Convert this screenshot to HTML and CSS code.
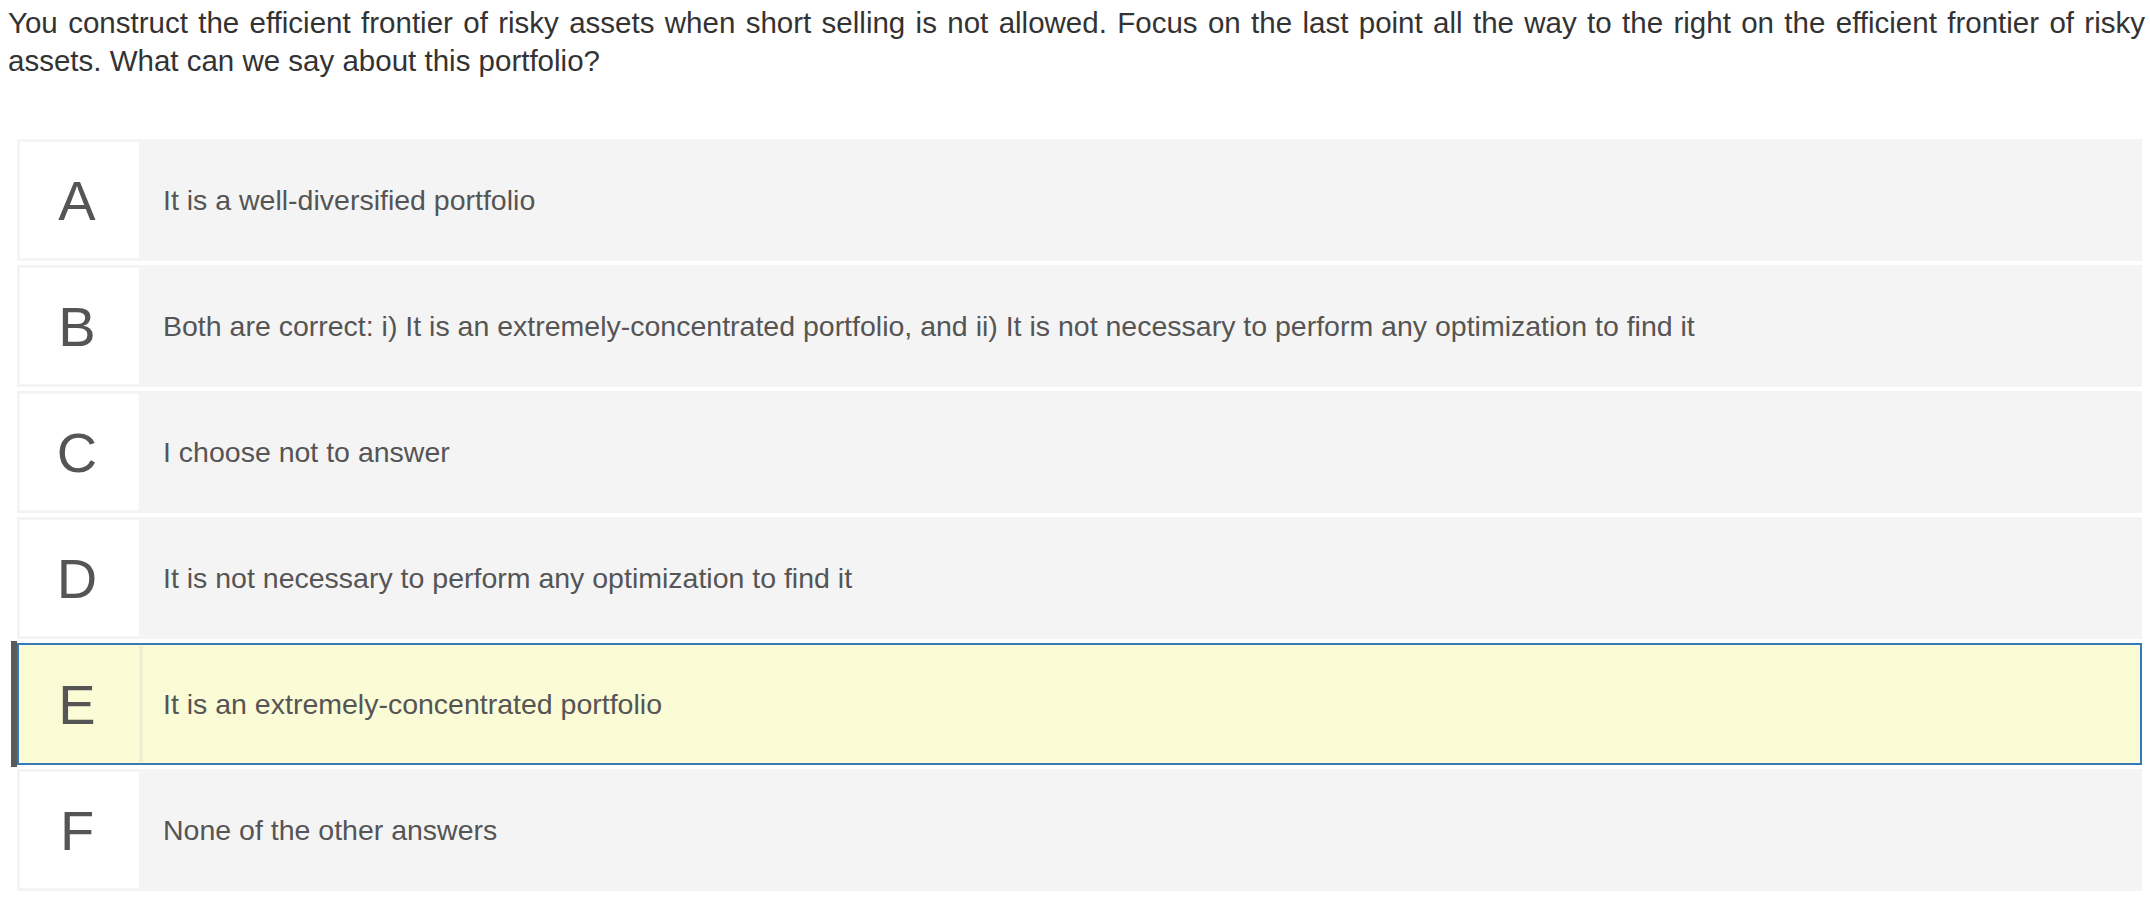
FILE: index.html
```html
<!DOCTYPE html>
<html lang="en">
<head>
<meta charset="utf-8">
<title>Question</title>
<link rel="stylesheet" href="styles.css">
</head>
<body>
<div class="page">
  <p class="question">You construct the efficient frontier of risky assets when short selling is not allowed. Focus on the last point all the way to the right on the efficient frontier of risky assets. What can we say about this portfolio?</p>
  <div class="options">
    <div class="option"><div class="letter">A</div><div class="text">It is a well-diversified portfolio</div></div>
    <div class="option"><div class="letter">B</div><div class="text">Both are correct: i) It is an extremely-concentrated portfolio, and ii) It is not necessary to perform any optimization to find it</div></div>
    <div class="option"><div class="letter">C</div><div class="text">I choose not to answer</div></div>
    <div class="option"><div class="letter">D</div><div class="text">It is not necessary to perform any optimization to find it</div></div>
    <div class="option selected"><div class="letter">E</div><div class="text">It is an extremely-concentrated portfolio</div></div>
    <div class="option"><div class="letter">F</div><div class="text">None of the other answers</div></div>
  </div>
</div>
</body>
</html>
```

FILE: styles.css
```css
html, body {
  margin: 0;
  padding: 0;
  background: #ffffff;
}

.page {
  padding: 4px 5px 0 8px;
  font-family: "Liberation Sans", Arial, Helvetica, sans-serif;
}

.question {
  margin: 0 0 59px 0;
  font-size: 29.5px;
  line-height: 38px;
  color: #333333;
  text-align: justify;
}

.options {
  display: flex;
  flex-direction: column;
  gap: 4px;
  margin: 0 3px 0 9px;
}

.option {
  display: flex;
  height: 122px;
  box-sizing: border-box;
  padding: 3px;
  background: #f4f4f4;
  position: relative;
}

.letter {
  flex: 0 0 119px;
  display: flex;
  align-items: center;
  justify-content: center;
  background: #ffffff;
  font-size: 56px;
  color: #555555;
  padding-right: 5px;
  box-sizing: border-box;
}

.text {
  flex: 1;
  display: flex;
  align-items: center;
  padding-left: 24px;
  font-size: 28.5px;
  color: #555555;
}

.option.selected {
  background: #fbfbd5;
  border: 2px solid #337ab7;
  padding: 1px;
}

.option.selected .letter {
  background: #fbfbd5;
  box-shadow: 4px 0 0 #f0efd2;
}

.option.selected::before {
  content: "";
  position: absolute;
  left: -8px;
  top: -4px;
  bottom: -4px;
  width: 6px;
  background: #5a5a5a;
}
```
